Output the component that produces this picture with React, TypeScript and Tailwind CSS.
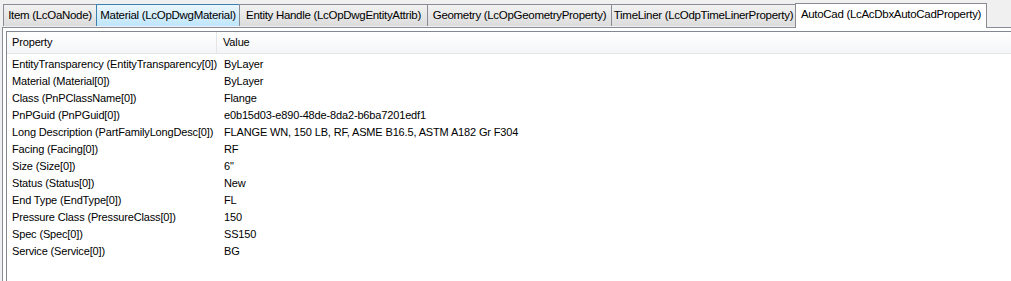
const tabs = [
  { label: 'Item (LcOaNode)', w: 94 },
  { label: 'Material (LcOpDwgMaterial)', w: 144, hot: true },
  { label: 'Entity Handle (LcOpDwgEntityAttrib)', w: 189 },
  { label: 'Geometry (LcOpGeometryProperty)', w: 185 },
  { label: 'TimeLiner (LcOdpTimeLinerProperty)', w: 185 },
];

const rows: [string, string][] = [
  ['EntityTransparency (EntityTransparency[0])', 'ByLayer'],
  ['Material (Material[0])', 'ByLayer'],
  ['Class (PnPClassName[0])', 'Flange'],
  ['PnPGuid (PnPGuid[0])', 'e0b15d03-e890-48de-8da2-b6ba7201edf1'],
  ['Long Description (PartFamilyLongDesc[0])', 'FLANGE WN, 150 LB, RF, ASME B16.5, ASTM A182 Gr F304'],
  ['Facing (Facing[0])', 'RF'],
  ['Size (Size[0])', '6"'],
  ['Status (Status[0])', 'New'],
  ['End Type (EndType[0])', 'FL'],
  ['Pressure Class (PressureClass[0])', '150'],
  ['Spec (Spec[0])', 'SS150'],
  ['Service (Service[0])', 'BG'],
];

export default function App() {
  return (
    <div
      className="w-[1011px] h-[281px] bg-[#f0f0f0] overflow-hidden text-[11px] tracking-[-0.15px] text-black"
      style={{ fontFamily: '"Liberation Sans", Arial, sans-serif' }}
    >
      {/* tab strip */}
      <div className="flex items-end h-[27px] pl-[3px] relative z-10">
        {tabs.map((t) => (
          <div
            key={t.label}
            style={{ width: t.w }}
            className={`h-[22px] mb-[1px] flex items-center justify-center border border-b-0 whitespace-nowrap text-[11.5px] tracking-[-0.3px] -mr-[1px] ${
              t.hot
                ? 'border-[#3c7fb1] bg-gradient-to-b from-[#eaf6fd] to-[#bee6fd]'
                : 'border-[#898c95] bg-gradient-to-b from-[#f2f2f2] to-[#dcdcdc]'
            }`}
          >
            {t.label}
          </div>
        ))}
        <div className="w-[192px] h-[25px] -mb-[1px] flex items-center justify-center border border-b-0 border-[#898c95] bg-white whitespace-nowrap text-[11.5px] tracking-[-0.3px] pb-[3px]">
          AutoCad (LcAcDbxAutoCadProperty)
        </div>
      </div>

      {/* tab page */}
      <div className="ml-[2px] h-[254px] border-l border-t border-[#898c95] bg-white pl-[3px] pt-[3px]">
        <div className="h-full border-l border-t border-[#828790] bg-white">
          <div className="flex h-[22px] border-b border-[#e5e5e5] bg-gradient-to-b from-white to-[#f4f5f7]">
            <div className="w-[210px] pl-[5px] flex items-center border-r border-[#e5e5e5]">Property</div>
            <div className="pl-[6px] flex items-center">Value</div>
          </div>
          <div className="pt-[2px]">
            {rows.map(([p, v]) => (
              <div key={p} className="flex h-[17px] items-center whitespace-nowrap">
                <div className="w-[211px] pl-[5px] overflow-hidden">{p}</div>
                <div className="pl-[6px]">{v}</div>
              </div>
            ))}
          </div>
        </div>
      </div>
    </div>
  );
}
